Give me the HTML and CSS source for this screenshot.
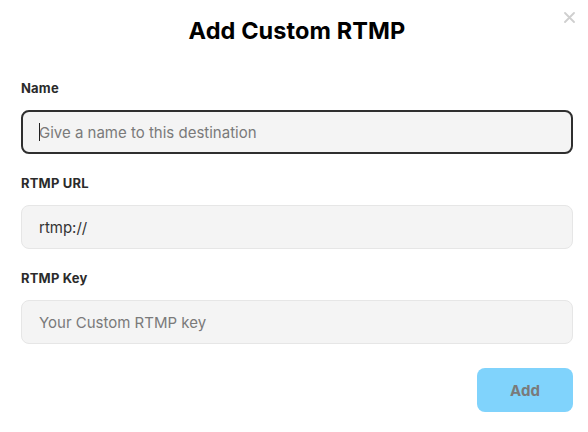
FILE: index.html
```html
<!DOCTYPE html>
<html>
<head>
<meta charset="utf-8">
<link rel="stylesheet" href="styles.css">
</head>
<body>
<div class="modal">
  <button class="close" aria-label="Close">
    <svg width="11" height="11" viewBox="0 0 11 11"><path d="M1 1L10 10M10 1L1 10" stroke="#cfcfcf" stroke-width="1.8" stroke-linecap="round"/></svg>
  </button>
  <h1 class="title">Add Custom RTMP</h1>
  <div class="field">
    <label class="label">Name</label>
    <div class="input-wrap focused">
      <input class="input focus" type="text" placeholder="Give a name to this destination">
      <span class="caret"></span>
    </div>
  </div>
  <div class="field">
    <label class="label">RTMP URL</label>
    <div class="input-wrap">
      <input class="input" type="text" value="rtmp://">
    </div>
  </div>
  <div class="field">
    <label class="label">RTMP Key</label>
    <div class="input-wrap">
      <input class="input" type="text" placeholder="Your Custom RTMP key">
    </div>
  </div>
  <div class="actions">
    <button class="add">Add</button>
  </div>
</div>
</body>
</html>
```

FILE: styles.css
```css
* { box-sizing: border-box; }
html, body {
  margin: 0;
  padding: 0;
  background: #ffffff;
  font-family: Inter, "Noto Sans", "Liberation Sans", sans-serif;
}
.modal {
  position: relative;
  width: 588px;
  height: 432px;
  padding: 17px 15px 0 21px;
  display: flex;
  flex-direction: column;
}
.close {
  position: absolute;
  top: 12px;
  right: 13px;
  border: 0;
  background: transparent;
  padding: 0;
  width: 11px;
  height: 11px;
  display: flex;
}
.title {
  margin: 0 0 35px;
  font-size: 23.5px;
  line-height: 28px;
  font-weight: 700;
  color: #000;
  text-align: center;
  letter-spacing: 0.1px;
}
.field {
  display: flex;
  flex-direction: column;
  margin-bottom: 21px;
}
.label {
  font-size: 13px;
  line-height: 16px;
  font-weight: 700;
  color: #2b2b2b;
  margin-bottom: 14px;
  letter-spacing: 0.2px;
}
.input-wrap {
  position: relative;
}
.input {
  width: 100%;
  height: 44px;
  border: 1.5px solid #e6e6e6;
  border-radius: 8px;
  background: #f4f4f4;
  padding: 0 16px 0 17px;
  font-family: inherit;
  font-size: 15px;
  color: #333;
  outline: none;
}
.input::placeholder { color: #7a7a7a; }
.input.focus {
  border: 2px solid #2f2f2f;
  padding-left: 16px;
}
.caret {
  position: absolute;
  left: 18px;
  top: 13px;
  width: 1px;
  height: 18px;
  background: #222;
}
.actions {
  display: flex;
  justify-content: flex-end;
  margin-top: 3px;
}
.add {
  width: 96px;
  height: 44px;
  border: 0;
  border-radius: 8px;
  background: #80d3fc;
  color: #7a7a7a;
  font-family: inherit;
  font-size: 15px;
  font-weight: 700;
}
```
